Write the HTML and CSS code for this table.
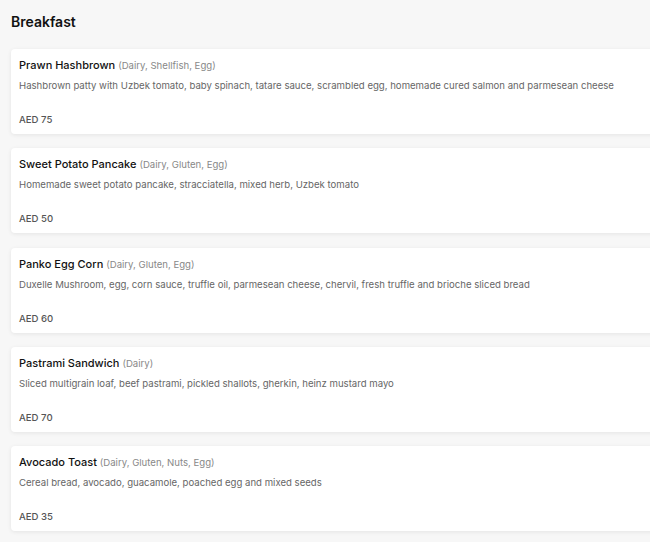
FILE: index.html
```html
<!DOCTYPE html>
<html lang="en">
<head>
  <meta charset="UTF-8" />
  <meta name="viewport" content="width=device-width, initial-scale=1.0"/>
  <title>Breakfast</title>
  <link rel="stylesheet" href="styles.css">
</head>
<body>
  <div class="menu">
    <h2 class="section-title">Breakfast</h2>

    <div class="item">
      <div class="item-name">Prawn Hashbrown <span class="allergens">(Dairy, Shellfish, Egg)</span></div>
      <div class="item-desc">Hashbrown patty with Uzbek tomato, baby spinach, tatare sauce, scrambled egg, homemade cured salmon and parmesean cheese</div>
      <div class="item-price">AED 75</div>
    </div>

    <div class="item">
      <div class="item-name">Sweet Potato Pancake <span class="allergens">(Dairy, Gluten, Egg)</span></div>
      <div class="item-desc">Homemade sweet potato pancake, stracciatella, mixed herb, Uzbek tomato</div>
      <div class="item-price">AED 50</div>
    </div>

    <div class="item">
      <div class="item-name">Panko Egg Corn <span class="allergens">(Dairy, Gluten, Egg)</span></div>
      <div class="item-desc">Duxelle Mushroom, egg, corn sauce, truffle oil, parmesean cheese, chervil, fresh truffle and brioche sliced bread</div>
      <div class="item-price">AED 60</div>
    </div>

    <div class="item">
      <div class="item-name">Pastrami Sandwich <span class="allergens">(Dairy)</span></div>
      <div class="item-desc">Sliced multigrain loaf, beef pastrami, pickled shallots, gherkin, heinz mustard mayo</div>
      <div class="item-price">AED 70</div>
    </div>

    <div class="item">
      <div class="item-name">Avocado Toast <span class="allergens">(Dairy, Gluten, Nuts, Egg)</span></div>
      <div class="item-desc">Cereal bread, avocado, guacamole, poached egg and mixed seeds</div>
      <div class="item-price">AED 35</div>
    </div>
  </div>
</body>
</html>
```

FILE: styles.css
```css
body {
  margin: 0;
  padding: 0;
  background-color: #f7f7f7;
  font-family: 'Inter', sans-serif;
  overflow: hidden;
}

.menu {
  padding: 13px 0 0 11px;
  width: 660px;
}

.section-title {
  margin: 0 0 18px 0;
  font-size: 14px;
  font-weight: 600;
  color: #111;
  line-height: 18px;
}

.item {
  background-color: #fff;
  border-radius: 4px;
  box-shadow: 0 1px 4px rgba(0, 0, 0, 0.08);
  padding: 9px 8px 9px 8px;
  margin-bottom: 14.3px;
  height: 67px;
}

.item-name {
  font-size: 11px;
  font-weight: 500;
  color: #111;
  line-height: 14px;
}

.allergens {
  font-size: 9.6px;
  font-weight: 400;
  color: #888;
}

.item-desc {
  margin-top: 6px;
  font-size: 9.6px;
  color: #666;
  line-height: 13px;
}

.item-price {
  margin-top: 21px;
  font-size: 9.6px;
  font-weight: 500;
  color: #555;
  line-height: 13px;
}
```
